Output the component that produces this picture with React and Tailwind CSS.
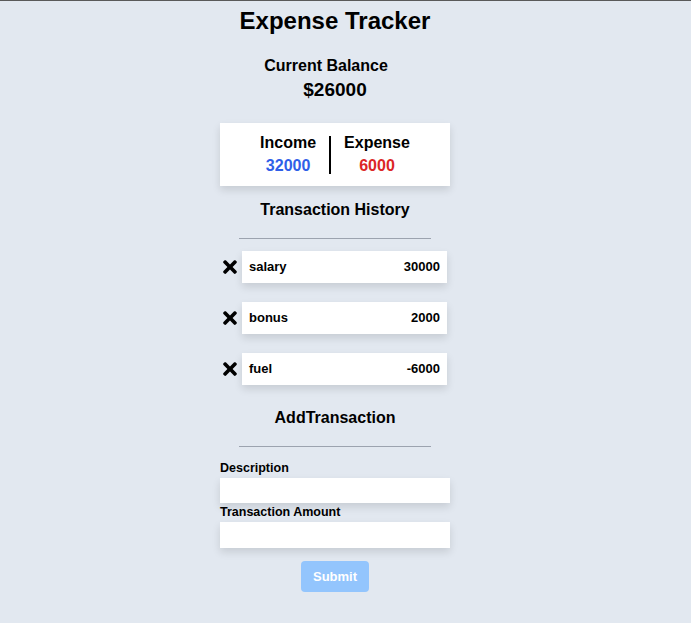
import React from "react";
import { FaTimes } from "react-icons/fa";

const transactions = [
  { id: 1, text: "salary", amount: 30000 },
  { id: 2, text: "bonus", amount: 2000 },
  { id: 3, text: "fuel", amount: -6000 },
];

const App = () => {
  return (
    <div
      className="min-h-screen bg-[#e2e8f0] border-t border-[#5a5a5a] text-black"
      style={{ fontFamily: '"Liberation Sans", Arial, sans-serif' }}
    >
      <div className="flex justify-center pr-[21px]">
        <div className="w-[230px] flex flex-col">
          {/* Header */}
          <h1 className="text-center text-[24px] font-bold leading-[28px] mt-[6px]">
            Expense Tracker
          </h1>

          {/* Balance */}
          <h4 className="text-center pr-[18px] text-[16px] font-bold leading-[20px] mt-[21px]">
            Current Balance
          </h4>
          <h1 className="text-center text-[19px] font-bold leading-[24px] mt-[2px]">
            $26000
          </h1>

          {/* Income / Expense */}
          <div className="mt-[21px] h-[63px] bg-white shadow-[0_4px_8px_rgba(0,0,0,0.12)] flex justify-center items-center">
            <div className="text-center">
              <h4 className="text-[16px] font-bold leading-[20px]">Income</h4>
              <p className="text-[16px] font-bold leading-[20px] mt-[3px] text-[#2f5fe8]">
                32000
              </p>
            </div>
            <div className="w-[2px] h-[38px] bg-black mx-[13px]"></div>
            <div className="text-center">
              <h4 className="text-[16px] font-bold leading-[20px]">Expense</h4>
              <p className="text-[16px] font-bold leading-[20px] mt-[3px] text-[#dc2626]">
                6000
              </p>
            </div>
          </div>

          {/* History */}
          <h3 className="text-center text-[16px] font-bold leading-[20px] mt-[14px]">
            Transaction History
          </h3>
          <hr className="w-[192px] mx-auto mt-[18px] border-0 border-t border-[#9ca3af]" />
          <ul className="mt-[12px] flex flex-col gap-[19px]">
            {transactions.map((t) => (
              <li key={t.id} className="flex items-center">
                <button className="w-[22px] flex justify-start text-black">
                  <FaTimes size={20} />
                </button>
                <div className="w-[205px] h-[32px] bg-white shadow-[0_4px_8px_rgba(0,0,0,0.12)] flex items-center justify-between px-[7px] text-[13px] font-bold">
                  <span>{t.text}</span>
                  <span>{t.amount}</span>
                </div>
              </li>
            ))}
          </ul>

          {/* Add transaction */}
          <h3 className="text-center text-[16px] font-bold leading-[20px] mt-[23px]">
            AddTransaction
          </h3>
          <hr className="w-[192px] mx-auto mt-[18px] border-0 border-t border-[#9ca3af]" />
          <form className="flex flex-col" onSubmit={(e) => e.preventDefault()}>
            <label className="text-[12.5px] font-bold leading-[16px] mt-[13px]">
              Description
            </label>
            <input
              type="text"
              className="mt-[2px] h-[25px] w-full bg-white shadow-[0_4px_8px_rgba(0,0,0,0.12)] outline-none"
            />
            <label className="text-[12.5px] font-bold leading-[16px] mt-[1px]">
              Transaction Amount
            </label>
            <input
              type="number"
              className="mt-[2px] h-[26px] w-full bg-white shadow-[0_4px_8px_rgba(0,0,0,0.12)] outline-none"
            />
            <button
              type="submit"
              className="mt-[13px] mx-auto w-[68px] h-[31px] rounded-[4px] bg-[#93c5fd] text-white text-[13px] font-bold"
            >
              Submit
            </button>
          </form>
        </div>
      </div>
    </div>
  );
};

export default App;
